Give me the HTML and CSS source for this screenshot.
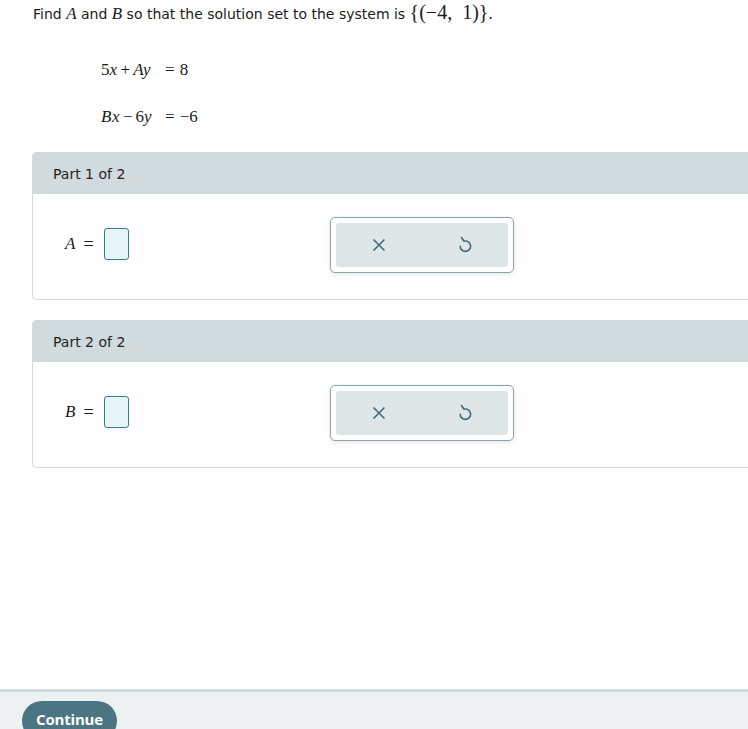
FILE: index.html
```html
<!DOCTYPE html>
<html>
<head>
<meta charset="utf-8">
<link rel="stylesheet" href="styles.css">
</head>
<body>
<div class="page">
  <p class="prompt">Find <span class="mi">A</span> and <span class="mi">B</span> so that the solution set to the system is <span class="math big">{(−4,&nbsp; 1)}</span><span class="math">.</span></p>

  <div class="system">
    <div class="lhs"><span class="mn">5</span><span class="mi">x</span><span class="mo">+</span><span class="mi">Ay</span></div>
    <div class="rhs"><span class="mo">=</span>8</div>
    <div class="lhs"><span class="mi">Bx</span><span class="mo">−</span><span class="mn">6</span><span class="mi">y</span></div>
    <div class="rhs"><span class="mo">=</span>−6</div>
  </div>

  <section class="card">
    <div class="card-head">Part 1 of 2</div>
    <div class="card-body">
      <div class="answer">
        <span class="mi var">A</span><span class="eq">=</span><span class="box"></span>
      </div>
      <div class="tools">
        <div class="tools-inner">
          <span class="tool"><svg width="14" height="14" viewBox="0 0 14 14"><path d="M1.5 1.5 L12.5 12.5 M12.5 1.5 L1.5 12.5" stroke="#3f6a76" stroke-width="1.6" fill="none"/></svg></span>
          <span class="tool"><svg width="16" height="18" viewBox="0 0 16 18"><path d="M4.5 1.5 L6.8 5 L8.5 5 A5.2 5.2 0 1 1 3.2 10.2" stroke="#3f6a76" stroke-width="1.6" fill="none" stroke-linecap="round" stroke-linejoin="round"/></svg></span>
        </div>
      </div>
    </div>
  </section>

  <section class="card">
    <div class="card-head">Part 2 of 2</div>
    <div class="card-body">
      <div class="answer">
        <span class="mi var">B</span><span class="eq">=</span><span class="box"></span>
      </div>
      <div class="tools">
        <div class="tools-inner">
          <span class="tool"><svg width="14" height="14" viewBox="0 0 14 14"><path d="M1.5 1.5 L12.5 12.5 M12.5 1.5 L1.5 12.5" stroke="#3f6a76" stroke-width="1.6" fill="none"/></svg></span>
          <span class="tool"><svg width="16" height="18" viewBox="0 0 16 18"><path d="M4.5 1.5 L6.8 5 L8.5 5 A5.2 5.2 0 1 1 3.2 10.2" stroke="#3f6a76" stroke-width="1.6" fill="none" stroke-linecap="round" stroke-linejoin="round"/></svg></span>
        </div>
      </div>
    </div>
  </section>
</div>
<footer class="footer">
  <button class="continue">Continue</button>
</footer>
</body>
</html>
```

FILE: styles.css
```css
html, body {
  margin: 0;
  padding: 0;
  height: 100%;
  overflow: hidden;
  background: #fff;
}
body {
  font-family: "DejaVu Sans", Verdana, sans-serif;
  color: #1a1a1a;
  display: flex;
  flex-direction: column;
}
.page {
  flex: 1;
}
.prompt {
  margin: 0;
  padding: 2px 0 0 33px;
  font-size: 14px;
  line-height: 20px;
  height: 47px;
  box-sizing: border-box;
}
.mi {
  font-family: "Liberation Serif", "Times New Roman", serif;
  font-style: italic;
  font-size: 17px;
}
.math {
  font-family: "Liberation Serif", "Times New Roman", serif;
  font-size: 17px;
}
.math.big {
  font-size: 20px;
}
.system {
  display: grid;
  grid-template-columns: max-content max-content;
  align-content: start;
  column-gap: 13px;
  row-gap: 23px;
  padding: 11px 0 0 101px;
  font-family: "Liberation Serif", "Times New Roman", serif;
  font-size: 17px;
  line-height: 24px;
  height: 105px;
  box-sizing: border-box;
}
.lhs .mi {
  letter-spacing: 0.5px;
}
.lhs .mo {
  padding: 0 3px;
}
.rhs .mo {
  padding: 0 5px 0 0;
}
.card {
  margin: 0 -20px 20px 32px;
  border: 1px solid #d1dadd;
  border-radius: 4px;
  overflow: hidden;
}
.card-head {
  height: 41px;
  background: #d1dadd;
  font-size: 14px;
  line-height: 42px;
  padding-left: 20px;
  color: #222;
}
.card-body {
  height: 105px;
  display: flex;
  align-items: flex-start;
}
.answer {
  display: flex;
  align-items: center;
  width: 265px;
  padding-left: 32px;
  margin-top: 34px;
}
.var {
  font-size: 17px;
}
.eq {
  font-family: "Liberation Serif", "Times New Roman", serif;
  font-size: 18px;
  margin: 0 10px 0 8px;
}
.box {
  width: 23px;
  height: 30px;
  border: 1px solid #2b8193;
  border-radius: 3px;
  background: #e6f4f8;
}
.tools {
  margin-top: 23px;
  border: 1px solid #8aa5ab;
  border-radius: 5px;
  padding: 5px;
  box-shadow: 0 1px 4px rgba(0, 0, 0, 0.12);
  background: #fff;
}
.tools-inner {
  width: 172px;
  height: 44px;
  background: #dfe6e8;
  border-radius: 3px;
  display: flex;
  align-items: center;
}
.tool {
  flex: 1;
  display: flex;
  justify-content: center;
  align-items: center;
}
.tool svg {
  display: block;
}
.footer {
  height: 28px;
  border-top: 3px solid #d1dadd;
  background: #eef1f2;
  padding: 9px 0 0 22px;
  overflow: hidden;
  flex: 0 0 auto;
}
.continue {
  display: block;
  font-family: "Open Sans", "Liberation Sans", sans-serif;
  font-weight: 700;
  font-size: 15px;
  color: #fff;
  background: #4a7581;
  border: none;
  border-radius: 20px;
  width: 95px;
  height: 40px;
  padding: 0 0 5px;
  line-height: 20px;
  letter-spacing: -0.2px;
}
```
